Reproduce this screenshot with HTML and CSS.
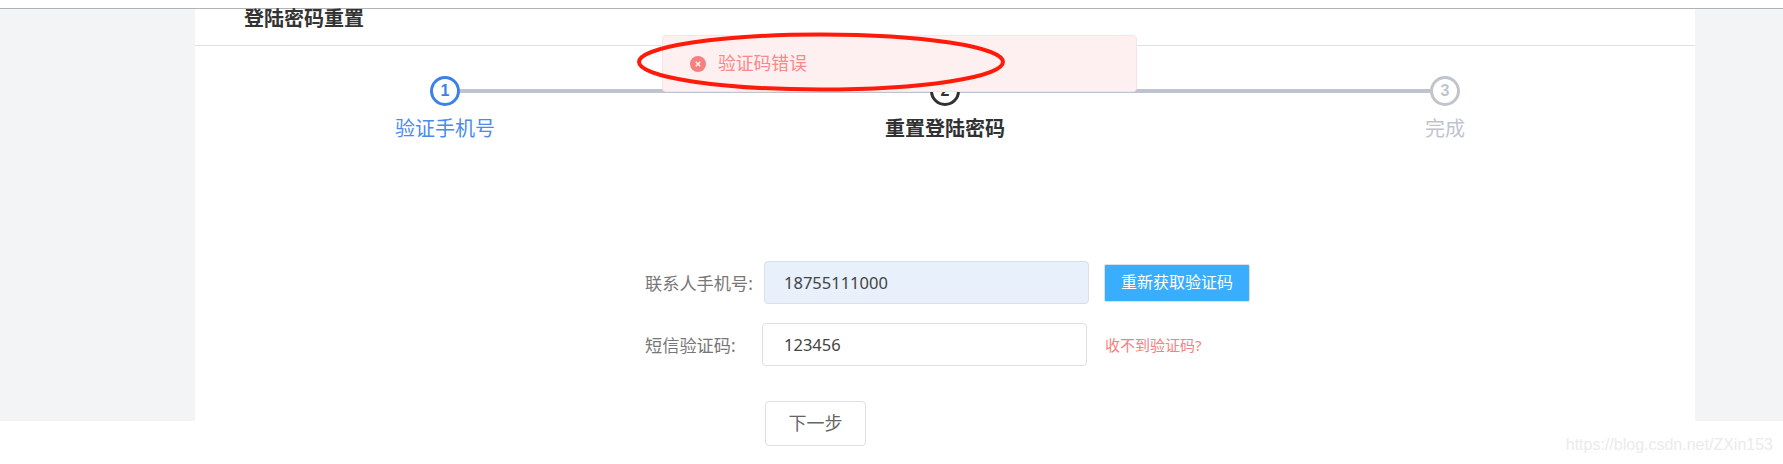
FILE: index.html
```html
<!DOCTYPE html>
<html lang="zh-CN">

<head>
  <meta charset="UTF-8">
  <title>登陆密码重置</title>
  <link rel="stylesheet" href="styles.css">
</head>

<body>
  <div class="topbar"></div>
  <div class="page">
    <div class="side"></div>
    <div class="main">
      <div class="title">登陆密码重置</div>

      <div class="steps">
        <div class="step done">
          <div class="head">
            <span class="bar none"></span>
            <span class="num">1</span>
            <span class="bar"></span>
          </div>
          <div class="name">验证手机号</div>
        </div>
        <div class="step now">
          <div class="head">
            <span class="bar"></span>
            <span class="num">2</span>
            <span class="bar"></span>
          </div>
          <div class="name">重置登陆密码</div>
        </div>
        <div class="step">
          <div class="head">
            <span class="bar"></span>
            <span class="num">3</span>
            <span class="bar none"></span>
          </div>
          <div class="name">完成</div>
        </div>
      </div>

      <div class="form">
        <div class="row phone">
          <label>联系人手机号:</label>
          <input class="field filled" type="text" value="18755111000">
          <a href="javascript:;" class="resend">重新获取验证码</a>
        </div>
        <div class="row sms">
          <label>短信验证码:</label>
          <input class="field" type="text" value="123456">
          <a href="javascript:;" class="help">收不到验证码?</a>
        </div>
        <a href="javascript:;" class="next">下一步</a>
      </div>
    </div>
    <div class="side"></div>
  </div>

  <div class="toast">
    <svg class="toast-icon" viewBox="0 0 16 16">
      <circle cx="8" cy="8" r="8" fill="#f67f7f"></circle>
      <path d="M5.8 5.8l4.4 4.4M10.2 5.8l-4.4 4.4" stroke="#fef0f0" stroke-width="1.6" fill="none"></path>
    </svg>
    <span class="toast-text">验证码错误</span>
  </div>

  <!-- 红圈标注 -->
  <svg class="mark" viewBox="0 0 372 62">
    <ellipse cx="186" cy="31" rx="182" ry="27.5" fill="none" stroke="#ff1a0a" stroke-width="4"></ellipse>
  </svg>

  <div class="watermark">https://blog.csdn.net/ZXin153</div>
</body>

</html>
```

FILE: styles.css
```css
* {
  box-sizing: border-box;
}

body {
  margin: 0;
  height: 464px;
  overflow: hidden;
  position: relative;
  background: #fff;
  color: #333;
  font-family: "Noto Sans", "Noto Sans CJK SC", sans-serif;
}

a {
  text-decoration: none;
}

.topbar {
  height: 9px;
  border-bottom: 1px solid #b2b2b2;
}

.page {
  display: grid;
  grid-template-columns: 195px 1500px 88px;
  align-items: start;
}

.side {
  height: 412px;
  background: #f3f4f6;
}

.title {
  height: 37px;
  padding-left: 49px;
  border-bottom: 1px solid #dfe1e5;
  font-size: 20px;
  font-weight: 700;
  line-height: 20px;
}

.steps {
  display: grid;
  grid-template-columns: repeat(3, 500px);
  margin-top: 30px;
}

.head {
  display: flex;
  align-items: center;
}

.bar {
  flex: 1;
  height: 4px;
  background: #bfc3cd;
}

.bar.none {
  background: none;
}

.num {
  width: 30px;
  height: 30px;
  border: 3px solid #c0c4cc;
  border-radius: 50%;
  color: #c0c4cc;
  font-family: "Liberation Sans", sans-serif;
  font-size: 16px;
  font-weight: 700;
  line-height: 24px;
  text-align: center;
}

.name {
  margin-top: 10px;
  color: #c0c4cc;
  font-size: 20px;
  line-height: 26px;
  text-align: center;
}

.done .num {
  border-color: #3b82e8;
  color: #3b82e8;
}

.done .name {
  color: #4a8bec;
}

.now .num {
  border-color: #303133;
  color: #303133;
}

.now .name {
  color: #303133;
  font-weight: 700;
}

.form {
  margin-top: 119px;
  padding-left: 450px;
}

.row {
  display: flex;
  align-items: center;
}

.row label {
  color: #777;
  font-size: 17.2px;
}

.phone label {
  width: 119px;
}

.sms label {
  width: 117px;
}

.sms {
  margin-top: 19px;
}

.field {
  width: 325px;
  height: 43px;
  padding: 0 19px;
  border: 1px solid #dcdfe6;
  border-radius: 4px;
  outline: none;
  background: #fff;
  color: #444;
  font-family: "Noto Sans", sans-serif;
  font-size: 16.5px;
}

.sms .field {
  padding-left: 21px;
}

.filled {
  background: #e8f0fb;
}

.resend {
  width: 146px;
  height: 38px;
  margin-left: 15px;
  border: 1px solid #dcdfe6;
  border-radius: 2px;
  background: #39aeff;
  color: #fff;
  font-size: 16px;
  line-height: 35px;
  text-align: center;
}

.help {
  margin-left: 18px;
  color: #f78080;
  font-size: 15px;
}

.next {
  display: block;
  width: 101px;
  height: 45px;
  margin: 35px 0 0 120px;
  border: 1px solid #dcdfe6;
  border-radius: 4px;
  color: #666;
  font-size: 18px;
  line-height: 43px;
  text-align: center;
}

.toast {
  position: absolute;
  left: 662px;
  top: 35px;
  width: 475px;
  height: 57px;
  display: flex;
  align-items: center;
  gap: 12px;
  padding-left: 27px;
  border: 1px solid #fde2e2;
  border-radius: 4px;
  background: #fef0f0;
  color: #f78989;
  font-size: 17.8px;
}

.toast-text {
  padding-bottom: 4px;
}

.toast-icon {
  width: 16px;
  height: 16px;
}

.mark {
  position: absolute;
  left: 635px;
  top: 31px;
  width: 372px;
  height: 62px;
}

.watermark {
  position: absolute;
  right: 10px;
  top: 436px;
  color: #ebebeb;
  font-family: "Liberation Sans", sans-serif;
  font-size: 16px;
}
```
